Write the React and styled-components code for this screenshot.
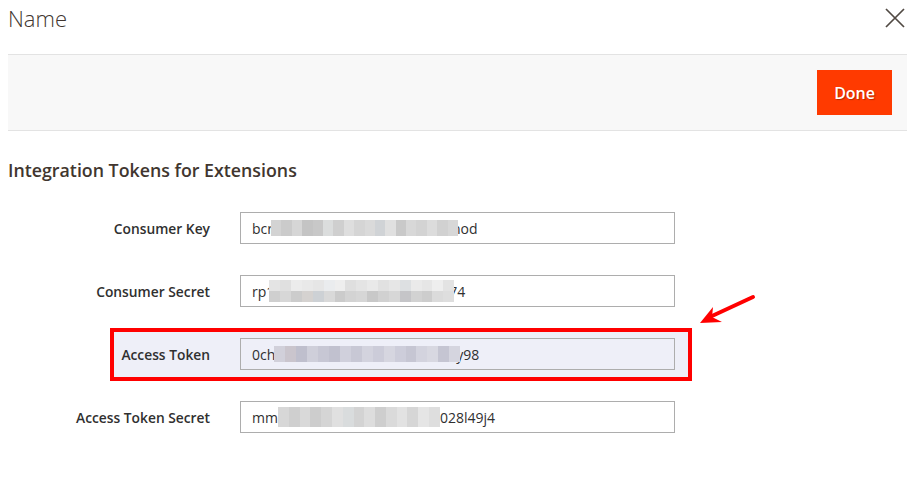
import React from 'react'
import styled, { createGlobalStyle } from 'styled-components';

const GlobalStyle = createGlobalStyle`
    body{
        margin:0;
        background:#fff;
        font-family:"Open Sans", "Liberation Sans", sans-serif;
        color:#303030;
    }
`;

const tokens = [
    {
        label: 'Consumer Key',
        prefix: 'bcr',
        suffix: 'nod',
        width: 187,
        rows: [[16, ['#d3d3d3', '#cbcbcb', '#d6d6d6', '#c4c4c4', '#c8c8c8', '#dbdddd', '#cfcfcf', '#dedede', '#d5d5d5', '#dadada', '#d0d3d6', '#e0e0e0', '#c9c9c9', '#d8d8d8', '#d3d3d3', '#dcdcdc', '#d1d1d1', '#d7d7d7']]],
        shift: -2,
        tail: -6,
    },
    {
        label: 'Consumer Secret',
        prefix: 'rp1',
        suffix: '74',
        width: 185,
        rows: [
            [11, ['#e4e4e4', '#e0e0e0', '#ececec', '#e9e9e9', '#e6e6e6', '#eaecee', '#eeeeee', '#dfdfdf', '#e4e4e4', '#e9e9e9', '#e1e1e1', '#e6e6e6', '#dde0e2', '#eaeaea', '#e6e6e6', '#eeeeee', '#e3e3e3']],
            [11, ['#cfcfcf', '#d7d7d7', '#cccccc', '#d5d2d0', '#cdd1d5', '#d9d9d9', '#cbcbcb', '#d3d3d3', '#d6d6d6', '#c8c8c8', '#d1d1d1', '#d7d7d7', '#c5c5c8', '#d2d2d2', '#cdcdcd', '#dbdbdb', '#dedede']],
        ],
        shift: -5,
        tail: -5,
    },
    {
        label: 'Access Token',
        prefix: '0ch',
        suffix: 'y98',
        highlight: true,
        width: 186,
        rows: [[16, ['#d1d0da', '#cac5cd', '#bfbfcd', '#cfcfda', '#c7c7d4', '#c1c1cf', '#d0d0dc', '#c8c8d5', '#d3d3de', '#ccccd9', '#d6d6e0', '#cdcdda', '#c6c6d3', '#d3d3de', '#d8d8e1', '#c5c5d2', '#d5d5df']]],
        shift: -1,
        tail: -4,
    },
    {
        label: 'Access Token Secret',
        prefix: 'mm',
        suffix: '028l49j4',
        width: 162,
        rows: [[20, ['#d7d7d7', '#cfcfcf', '#d9d9d9', '#cdcdcd', '#d5d5d5', '#e0e0e0', '#d9dcdd', '#d3d3d3', '#dddddd', '#cecece', '#dadada', '#e2e2e2', '#d6d6d6', '#e5e5e5', '#dedede']]],
        shift: 0,
        tail: 0,
    },
];

const Blurred = ({ width, rows, shift, tail }) => (
    <BlurBox style={{ width, marginLeft: shift, marginRight: tail }}>
        {rows.map(([h, cells], i) => (
            <BlurRow key={i} h={h}>
                {cells.map((c, j) => <BlurCell key={j} style={{ background: c }} />)}
            </BlurRow>
        ))}
    </BlurBox>
);

const App = () => {
    return (
        <Modal>
            <GlobalStyle />
            <Header>
                <Title>Name</Title>
                <Close aria-label="Close">
                    <svg width="20" height="20" viewBox="0 0 20 20">
                        <path d="M1 1 L19 19 M19 1 L1 19" stroke="#514943" strokeWidth="1.7" fill="none" />
                    </svg>
                </Close>
            </Header>
            <Toolbar>
                <Button>Done</Button>
            </Toolbar>
            <SectionTitle>Integration Tokens for Extensions</SectionTitle>
            <Form>
                {tokens.map(t => (
                    <Row key={t.label} highlight={t.highlight ? 1 : 0}>
                        <Label>{t.label}</Label>
                        <Field>
                            <span>{t.prefix}</span>
                            <Blurred width={t.width} rows={t.rows} shift={t.shift} tail={t.tail} />
                            <span>{t.suffix}</span>
                        </Field>
                    </Row>
                ))}
                <Arrow width="72" height="40" viewBox="0 0 72 40">
                    <path d="M63 7 L22 26" stroke="#ff0000" strokeWidth="4" strokeLinecap="round" />
                    <polygon points="10,33 23,17 22,27 32,32" fill="#ff0000" />
                </Arrow>
            </Form>
        </Modal>
    )
}

export default App

const Modal = styled.div`
    padding:0 10px 40px 8px;
`;
const Header = styled.div`
    display:flex;
    justify-content:space-between;
    align-items:flex-start;
    height:54px;
    box-sizing:border-box;
    padding-top:5px;
`;
const Title = styled.h1`
    margin:0;
    font-size:22px;
    line-height:26px;
    font-weight:300;
    color:#41362f;
`;
const Close = styled.div`
    margin-top:3px;
    margin-right:2px;
    >svg{ display:block; }
`;
const Toolbar = styled.div`
    display:flex;
    justify-content:flex-end;
    background:#f8f8f8;
    border-top:1px solid #e3e3e3;
    border-bottom:1px solid #e3e3e3;
    padding:15px;
`;
const Button = styled.button`
    height:45px;
    padding:0 17px;
    border:none;
    background:#ff3a00;
    color:#fff;
    font-family:inherit;
    font-size:16px;
    font-weight:600;
    text-shadow:1px 1px 1px rgba(0,0,0,.3);
    cursor:pointer;
`;
const SectionTitle = styled.h2`
    margin:28px 0 0;
    font-size:17.8px;
    line-height:22px;
    font-weight:600;
    color:#41362f;
`;
const Form = styled.div`
    position:relative;
    margin-top:31px;
    display:flex;
    flex-direction:column;
    gap:31px;
`;
const Row = styled.div`
    position:relative;
    isolation:isolate;
    display:grid;
    grid-template-columns:202px 435px;
    column-gap:30px;
    align-items:center;
    ${p => p.highlight ? `
        &::before{
            content:'';
            position:absolute;
            z-index:-1;
            left:102px;
            width:582px;
            top:-10px;
            bottom:-11px;
            box-sizing:border-box;
            border:4px solid #ff0000;
            background:#eeeff8;
        }
    ` : ''}
`;
const Label = styled.div`
    text-align:right;
    font-size:13.8px;
    font-weight:600;
    color:#303030;
`;
const Field = styled.div`
    display:flex;
    align-items:center;
    height:32px;
    box-sizing:border-box;
    border:1px solid #adadad;
    padding:0 11px;
    font-size:14px;
    color:#303030;
    white-space:nowrap;
    overflow:hidden;
`;
const BlurBox = styled.div`
    position:relative;
    z-index:1;
    display:flex;
    flex-direction:column;
    flex-shrink:0;
`;
const BlurRow = styled.div`
    display:flex;
    height:${p => p.h}px;
`;
const BlurCell = styled.div`
    flex:1;
`;
const Arrow = styled.svg`
    position:absolute;
    left:682px;
    top:78px;
`;
